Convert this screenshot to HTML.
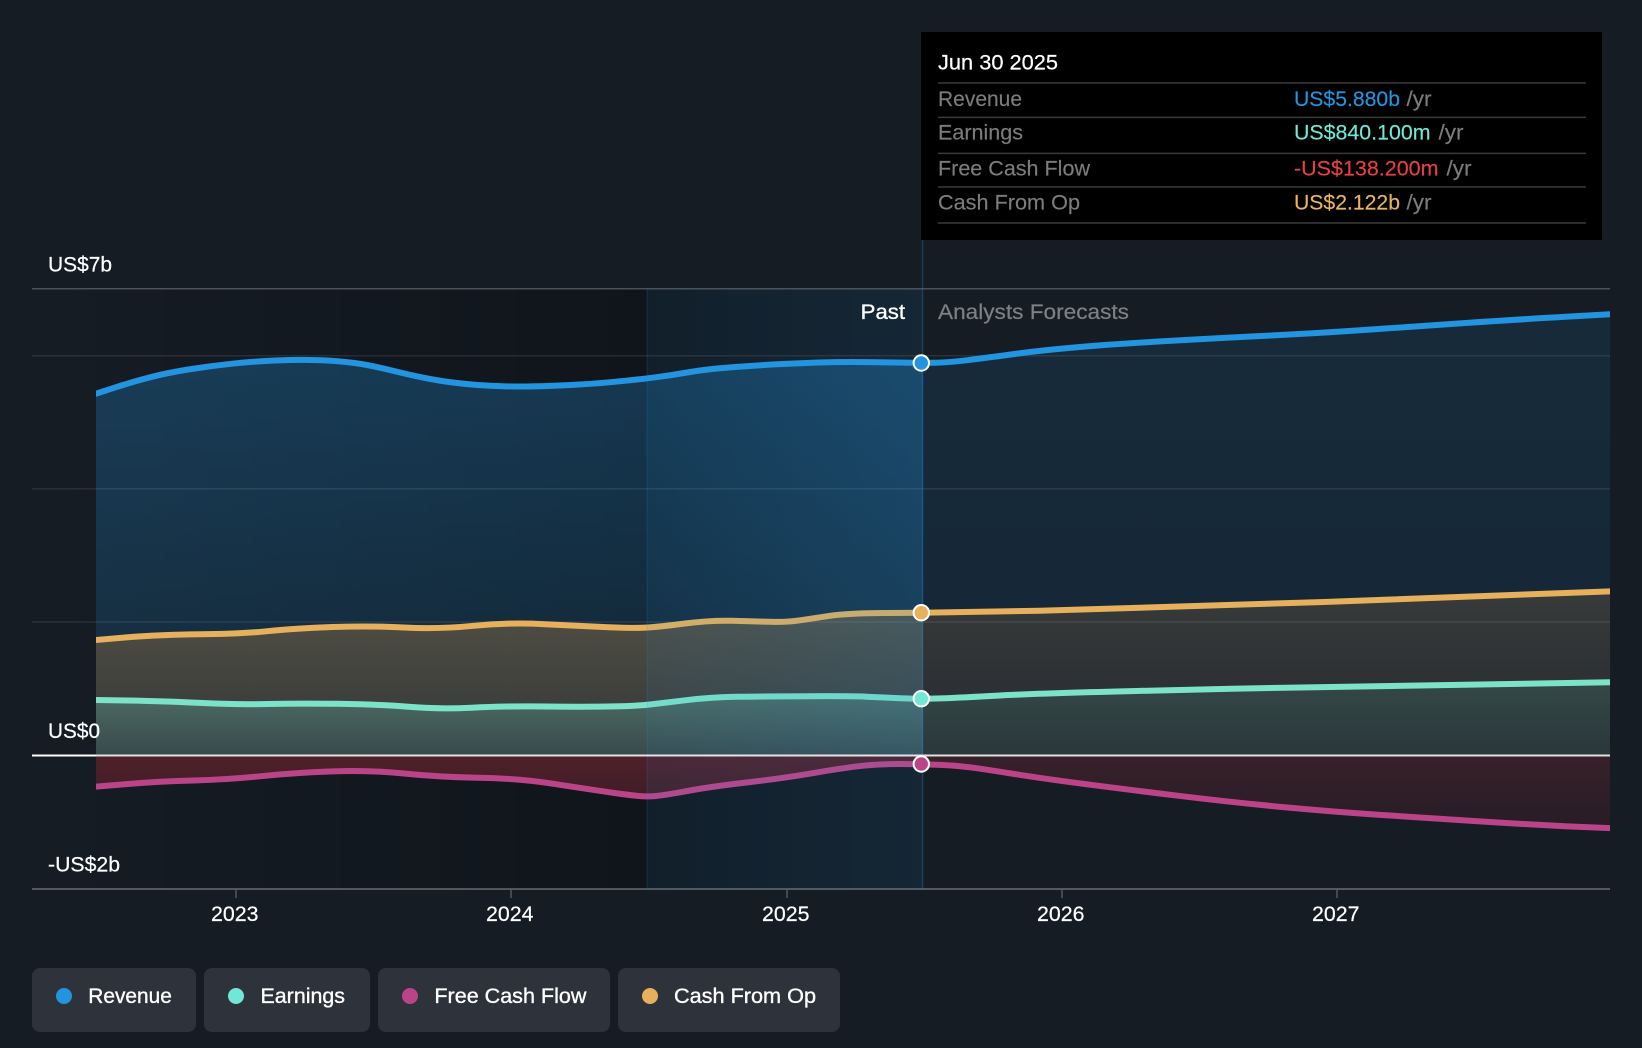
<!DOCTYPE html>
<html lang="en">
<head>
<meta charset="utf-8">
<title>Revenue, Earnings and Cash Flow Chart</title>
<style>
html,body{margin:0;padding:0;background:#151c24;width:1642px;height:1048px;overflow:hidden}
svg{display:block}
text{font-family:"Liberation Sans",Arial,sans-serif;font-size:21px}
</style>
</head>
<body>
<svg width="1642" height="1048" viewBox="0 0 1642 1048" xmlns="http://www.w3.org/2000/svg">
<defs>
<clipPath id="all"><rect x="96" y="280" width="1514" height="610"/></clipPath>
<clipPath id="past"><rect x="96" y="280" width="827" height="610"/></clipPath>
<clipPath id="fore"><rect x="923" y="280" width="687" height="610"/></clipPath>
<clipPath id="hlc"><rect x="647" y="289" width="276" height="600"/></clipPath>
<linearGradient id="dark" x1="32" x2="647" y1="0" y2="0" gradientUnits="userSpaceOnUse"><stop offset="0" stop-color="#000" stop-opacity="0"/><stop offset="1" stop-color="#000" stop-opacity=".25"/></linearGradient>
<linearGradient id="dark2" x1="647" x2="923" y1="0" y2="0" gradientUnits="userSpaceOnUse"><stop offset="0" stop-color="#000" stop-opacity=".25"/><stop offset="1" stop-color="#000" stop-opacity=".08"/></linearGradient>
<linearGradient id="hl" x1="647" x2="923" y1="0" y2="0" gradientUnits="userSpaceOnUse"><stop offset="0" stop-color="#2394df" stop-opacity=".08"/><stop offset="1" stop-color="#2394df" stop-opacity=".105"/></linearGradient>
<linearGradient id="hl2" x1="647" x2="923" y1="0" y2="0" gradientUnits="userSpaceOnUse"><stop offset="0" stop-color="#2394df" stop-opacity="0"/><stop offset="1" stop-color="#2394df" stop-opacity=".08"/></linearGradient>
<linearGradient id="revP" x1="0" x2="0" y1="360" y2="755" gradientUnits="userSpaceOnUse"><stop offset="0" stop-color="#2394df" stop-opacity=".28"/><stop offset=".66" stop-color="#2394df" stop-opacity=".17"/><stop offset="1" stop-color="#2394df" stop-opacity=".1"/></linearGradient>
<linearGradient id="revF" x1="0" x2="0" y1="314" y2="755" gradientUnits="userSpaceOnUse"><stop offset="0" stop-color="#2394df" stop-opacity=".12"/><stop offset="1" stop-color="#2394df" stop-opacity=".09"/></linearGradient>
<linearGradient id="orP" x1="0" x2="0" y1="612" y2="700" gradientUnits="userSpaceOnUse"><stop offset="0" stop-color="#504e43"/><stop offset="1" stop-color="#3e403d"/></linearGradient>
<linearGradient id="orF" x1="0" x2="0" y1="590" y2="690" gradientUnits="userSpaceOnUse"><stop offset="0" stop-color="#383b3a"/><stop offset="1" stop-color="#2d3034"/></linearGradient>
<linearGradient id="teP" x1="0" x2="0" y1="696" y2="755" gradientUnits="userSpaceOnUse"><stop offset="0" stop-color="#4c6b62"/><stop offset="1" stop-color="#39494b"/></linearGradient>
<linearGradient id="teF" x1="0" x2="0" y1="682" y2="755" gradientUnits="userSpaceOnUse"><stop offset="0" stop-color="#344846"/><stop offset="1" stop-color="#2b373b"/></linearGradient>
<linearGradient id="piP" x1="0" x2="0" y1="756" y2="796" gradientUnits="userSpaceOnUse"><stop offset="0" stop-color="#4f2029"/><stop offset="1" stop-color="#3f1e27"/></linearGradient>
<linearGradient id="piF" x1="0" x2="0" y1="756" y2="828" gradientUnits="userSpaceOnUse"><stop offset="0" stop-color="#37212a"/><stop offset="1" stop-color="#271c26"/></linearGradient>
<path id="aRev" d="M92,395 L114,387.8 Q132,382 150,377.3 Q168,372.7 189,369.4 Q210,366 231,363.8 Q252,361.5 275.5,360.5 Q299,359.5 318,360.1 Q337,360.7 353.5,362.9 Q370,365 395.5,371.4 Q421,377.7 442,381 Q463,384.3 490.5,385.8 Q518,387.3 553.5,385.8 Q589,384.3 614.5,381.8 Q640,379.3 656.5,377.2 Q673,375 690,372 Q707,369 732,367.2 Q757,365.3 782,364 Q807,362.7 830,362.2 Q853,361.7 887,362.4 Q921,363 935.5,362.7 Q950,362.3 966.5,360.3 Q983,358.3 1011.5,354.4 Q1040,350.5 1077,347.3 Q1114,344 1169.5,340.9 Q1225,337.7 1273,335.4 Q1321,333 1365.5,329.9 Q1410,326.7 1465.5,323 Q1521,319.3 1565.5,316.8 L1614,314 L1614,755.5 L92,755.5 Z"/>
<path id="aOr" d="M92,640.3 L128,637.3 Q160,634.7 200,634.3 Q240,634 267.5,631.2 Q295,628.3 332.5,627 Q370,625.7 404,627.5 Q438,629.3 473.5,625.8 Q509,622.3 545,624.2 Q581,626 608.5,627.2 Q636,628.3 648,627.5 Q660,626.7 685,623.5 Q710,620.3 731.5,620.8 Q753,621.3 770,621.8 Q787,622.3 800,620.3 Q813,618.3 830,615.8 Q847,613.3 884,613 L921,612.7 L1040,610.8 L1324,602 L1614,591.2 L1614,755.5 L92,755.5 Z"/>
<path id="aTe" d="M92,700 L128,700.5 Q160,701 200,702.9 Q240,704.7 267.5,704 Q295,703.3 337,703.8 Q379,704.3 408.5,706.8 Q438,709.3 471.5,707.7 Q505,706 547,706.5 Q589,707 614.5,706.4 Q640,705.7 650,704.5 Q660,703.3 685,700.3 Q710,697.3 736.5,696.8 Q763,696.3 808,696.2 Q853,696 866.5,696.7 Q880,697.3 900.5,698.2 Q921,699 940.5,698.4 Q960,697.7 1000,695.5 Q1040,693.3 1136,691 L1232,688.7 L1614,682.2 L1614,755.5 L92,755.5 Z"/>
<path id="aPi" d="M92,787 L128,784 Q160,781.3 193.5,780.5 Q227,779.7 261,776.2 Q295,772.7 332.5,771.4 Q370,770 404,773.5 Q438,777 478,777.7 Q518,778.3 553.5,783.8 Q589,789.3 614.5,793 Q640,796.7 650,796.4 Q660,796 685,791.4 Q710,786.7 746.5,782.5 Q783,778.3 815,772.8 Q847,767.3 863.5,765.7 Q880,764 900.5,764 Q921,764 940.5,764.9 Q960,765.7 980,768.7 Q1000,771.7 1020,774.9 Q1040,778 1078.5,783.2 Q1117,788.3 1174.5,795.3 Q1232,802.3 1282,807 Q1332,811.7 1378,814.7 Q1424,817.7 1472,820.9 Q1520,824 1565,826.2 L1614,828.3 L1614,755.5 L92,755.5 Z"/>
</defs>

<rect width="1642" height="1048" fill="#151c24"/>
<rect x="32" y="289" width="615" height="600" fill="url(#dark)"/>
<rect x="647" y="289" width="276" height="600" fill="url(#dark2)"/>

<g clip-path="url(#past)">
<use href="#aRev" fill="url(#revP)"/>
<use href="#aOr" fill="url(#orP)"/>
<use href="#aTe" fill="url(#teP)"/>
<use href="#aPi" fill="url(#piP)"/>
</g>
<g clip-path="url(#fore)">
<use href="#aRev" fill="url(#revF)"/>
<use href="#aOr" fill="url(#orF)"/>
<use href="#aTe" fill="url(#teF)"/>
<use href="#aPi" fill="url(#piF)"/>
</g>

<g stroke="#fff" fill="none">
<path d="M32,355.7H1610M32,488.7H1610M32,622H1610" stroke-width="1.5" stroke-opacity=".09"/>
<path d="M32,288.7H1610" stroke-width="1.5" stroke-opacity=".24"/>
<path d="M32,889H1610" stroke-width="2" stroke-opacity=".27"/>
<path d="M236,890V898M511,890V898M787,890V898M1062,890V898M1337,890V898" stroke-width="2" stroke-opacity=".2"/>
</g>

<g clip-path="url(#all)" fill="none" stroke-width="6">
<path stroke="#2394df" d="M92,395 L114,387.8 Q132,382 150,377.3 Q168,372.7 189,369.4 Q210,366 231,363.8 Q252,361.5 275.5,360.5 Q299,359.5 318,360.1 Q337,360.7 353.5,362.9 Q370,365 395.5,371.4 Q421,377.7 442,381 Q463,384.3 490.5,385.8 Q518,387.3 553.5,385.8 Q589,384.3 614.5,381.8 Q640,379.3 656.5,377.2 Q673,375 690,372 Q707,369 732,367.2 Q757,365.3 782,364 Q807,362.7 830,362.2 Q853,361.7 887,362.4 Q921,363 935.5,362.7 Q950,362.3 966.5,360.3 Q983,358.3 1011.5,354.4 Q1040,350.5 1077,347.3 Q1114,344 1169.5,340.9 Q1225,337.7 1273,335.4 Q1321,333 1365.5,329.9 Q1410,326.7 1465.5,323 Q1521,319.3 1565.5,316.8 L1614,314"/>
<path stroke="#e6b05c" d="M92,640.3 L128,637.3 Q160,634.7 200,634.3 Q240,634 267.5,631.2 Q295,628.3 332.5,627 Q370,625.7 404,627.5 Q438,629.3 473.5,625.8 Q509,622.3 545,624.2 Q581,626 608.5,627.2 Q636,628.3 648,627.5 Q660,626.7 685,623.5 Q710,620.3 731.5,620.8 Q753,621.3 770,621.8 Q787,622.3 800,620.3 Q813,618.3 830,615.8 Q847,613.3 884,613 L921,612.7 L1040,610.8 L1324,602 L1614,591.2"/>
<path stroke="#7ce3c8" d="M92,700 L128,700.5 Q160,701 200,702.9 Q240,704.7 267.5,704 Q295,703.3 337,703.8 Q379,704.3 408.5,706.8 Q438,709.3 471.5,707.7 Q505,706 547,706.5 Q589,707 614.5,706.4 Q640,705.7 650,704.5 Q660,703.3 685,700.3 Q710,697.3 736.5,696.8 Q763,696.3 808,696.2 Q853,696 866.5,696.7 Q880,697.3 900.5,698.2 Q921,699 940.5,698.4 Q960,697.7 1000,695.5 Q1040,693.3 1136,691 L1232,688.7 L1614,682.2"/>
<path stroke="#bb4488" d="M92,787 L128,784 Q160,781.3 193.5,780.5 Q227,779.7 261,776.2 Q295,772.7 332.5,771.4 Q370,770 404,773.5 Q438,777 478,777.7 Q518,778.3 553.5,783.8 Q589,789.3 614.5,793 Q640,796.7 650,796.4 Q660,796 685,791.4 Q710,786.7 746.5,782.5 Q783,778.3 815,772.8 Q847,767.3 863.5,765.7 Q880,764 900.5,764 Q921,764 940.5,764.9 Q960,765.7 980,768.7 Q1000,771.7 1020,774.9 Q1040,778 1078.5,783.2 Q1117,788.3 1174.5,795.3 Q1232,802.3 1282,807 Q1332,811.7 1378,814.7 Q1424,817.7 1472,820.9 Q1520,824 1565,826.2 L1614,828.3"/>
</g>

<rect x="647" y="289" width="276" height="600" fill="url(#hl)"/>
<g clip-path="url(#hlc)"><use href="#aRev" fill="url(#hl2)"/></g>
<path d="M647.3,289V889" stroke="#2394df" stroke-opacity=".12" stroke-width="1.5"/>
<path d="M922.6,240V889" stroke="#2394df" stroke-opacity=".25" stroke-width="1.5"/>

<path d="M32,755.5H1610" stroke="#fff" stroke-width="2" stroke-opacity=".85"/>
<path d="M32,755.5H96" stroke="#fff" stroke-width="2"/>

<g stroke="#fff" stroke-width="2">
<circle cx="921.3" cy="363" r="7.7" fill="#2394df"/>
<circle cx="921.3" cy="612.7" r="7.7" fill="#e6b05c"/>
<circle cx="921.3" cy="698.7" r="7.7" fill="#71e7d6"/>
<circle cx="921.3" cy="764" r="7.7" fill="#bb4488"/>
</g>

<g fill="#fff" stroke="#fff" stroke-width=".2">
<text x="48" y="271.5" textLength="64" lengthAdjust="spacingAndGlyphs">US$7b</text>
<text x="48" y="738" textLength="52" lengthAdjust="spacingAndGlyphs">US$0</text>
<text x="48" y="871.5" textLength="72" lengthAdjust="spacingAndGlyphs">-US$2b</text>
<text x="860.7" y="319" textLength="44.3" lengthAdjust="spacingAndGlyphs" stroke-width=".35">Past</text>
<text x="211" y="921" textLength="47.5" lengthAdjust="spacingAndGlyphs">2023</text>
<text x="486" y="921" textLength="47.5" lengthAdjust="spacingAndGlyphs">2024</text>
<text x="762" y="921" textLength="47.5" lengthAdjust="spacingAndGlyphs">2025</text>
<text x="1037" y="921" textLength="47.5" lengthAdjust="spacingAndGlyphs">2026</text>
<text x="1312" y="921" textLength="47.5" lengthAdjust="spacingAndGlyphs">2027</text>
</g>
<text x="938" y="319" textLength="191" lengthAdjust="spacingAndGlyphs" fill="#7d8085" stroke="#7d8085" stroke-width=".2">Analysts Forecasts</text>

<rect x="921" y="32" width="681" height="208" fill="#000"/>
<path d="M938,83H1586M938,117.4H1586M938,153.4H1586M938,187H1586M938,223H1586" stroke="#3a3a3a" stroke-width="1.5"/>
<text x="938" y="69.5" textLength="120" lengthAdjust="spacingAndGlyphs" fill="#fff" stroke="#fff" stroke-width=".2">Jun 30 2025</text>
<g fill="#7c7c7c" stroke="#7c7c7c" stroke-width=".15">
<text x="938" y="106" textLength="84" lengthAdjust="spacingAndGlyphs">Revenue</text>
<text x="938" y="139.5" textLength="85" lengthAdjust="spacingAndGlyphs">Earnings</text>
<text x="938" y="175.5" textLength="152" lengthAdjust="spacingAndGlyphs">Free Cash Flow</text>
<text x="938" y="209.5" textLength="142" lengthAdjust="spacingAndGlyphs">Cash From Op</text>
<text x="1406.5" y="106" textLength="25" lengthAdjust="spacingAndGlyphs">/yr</text>
<text x="1438.5" y="139.5" textLength="25" lengthAdjust="spacingAndGlyphs">/yr</text>
<text x="1446.5" y="175.5" textLength="25" lengthAdjust="spacingAndGlyphs">/yr</text>
<text x="1406.5" y="209.5" textLength="25" lengthAdjust="spacingAndGlyphs">/yr</text>
</g>
<text x="1294" y="106" textLength="106" lengthAdjust="spacingAndGlyphs" fill="#2394df" stroke="#2394df" stroke-width=".15">US$5.880b</text>
<text x="1294" y="139.5" textLength="136.5" lengthAdjust="spacingAndGlyphs" fill="#71e7d6" stroke="#71e7d6" stroke-width=".15">US$840.100m</text>
<text x="1294" y="175.5" textLength="144.5" lengthAdjust="spacingAndGlyphs" fill="#e64141" stroke="#e64141" stroke-width=".15">-US$138.200m</text>
<text x="1294" y="209.5" textLength="106" lengthAdjust="spacingAndGlyphs" fill="#e9b35f" stroke="#e9b35f" stroke-width=".15">US$2.122b</text>

<g fill="#2e333b">
<rect x="32" y="968" width="164" height="64" rx="8"/>
<rect x="204" y="968" width="166" height="64" rx="8"/>
<rect x="378" y="968" width="232" height="64" rx="8"/>
<rect x="618" y="968" width="222" height="64" rx="8"/>
</g>
<circle cx="64" cy="996" r="8" fill="#2394df"/>
<circle cx="236" cy="996" r="8" fill="#71e7d6"/>
<circle cx="410" cy="996" r="8" fill="#bb4488"/>
<circle cx="650" cy="996" r="8" fill="#e6b05c"/>
<g fill="#fff" stroke="#fff" stroke-width=".35">
<text x="88.3" y="1003" textLength="83.5" lengthAdjust="spacingAndGlyphs">Revenue</text>
<text x="260.5" y="1003" textLength="84.5" lengthAdjust="spacingAndGlyphs">Earnings</text>
<text x="434.4" y="1003" textLength="152" lengthAdjust="spacingAndGlyphs">Free Cash Flow</text>
<text x="674" y="1003" textLength="142" lengthAdjust="spacingAndGlyphs">Cash From Op</text>
</g>
</svg>
</body>
</html>
